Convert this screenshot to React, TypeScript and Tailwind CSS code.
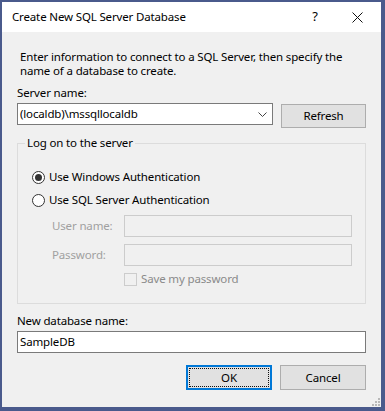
import React from "react";

const font = "font-['Noto_Sans',sans-serif] tracking-[-0.15px]";

function Radio({ checked, label }: { checked?: boolean; label: string }) {
  return (
    <div className="flex items-center h-[16px]">
      <span className="w-[13px] h-[13px] rounded-full border border-[#333] bg-white flex items-center justify-center shrink-0">
        {checked && <span className="w-[7px] h-[7px] rounded-full bg-[#333]" />}
      </span>
      <span className="ml-[4px] text-[11.5px] leading-[16px] text-black">{label}</span>
    </div>
  );
}

function DisabledField({ label }: { label: string }) {
  return (
    <div className="flex items-center h-[22px]">
      <span className="w-[92px] pl-[20px] text-[11.5px] text-[#a0a0a0] whitespace-nowrap">{label}</span>
      <div className="w-[228px] h-[22px] border border-[#cccccc] bg-[#f0f0f0]" />
    </div>
  );
}

export default function App() {
  return (
    <div className={`w-[385px] h-[411px] bg-[#4a5a8c] pt-[2px] pl-[2px] pr-[4px] pb-[4px] ${font}`}>
      <div className="relative flex flex-col h-full bg-[#f0f0f0]">
        {/* title bar */}
        <div className="flex items-center h-[30px] bg-white pl-[10px] shrink-0">
          <span className="text-[11.5px] text-black">Create New SQL Server Database</span>
          <span className="ml-auto w-[20px] text-center text-[13px] text-black">?</span>
          <svg className="ml-[27px] mr-[18px]" width="11" height="11" viewBox="0 0 11 11">
            <path d="M0.5 0.5 L10.5 10.5 M10.5 0.5 L0.5 10.5" stroke="#111" strokeWidth="1" />
          </svg>
        </div>

        <div className="flex flex-col px-[15px]">
          <p className="mt-[18px] ml-[3px] text-[11.5px] leading-[14px] text-black">
            Enter information to connect to a SQL Server, then specify the name of a database to create.
          </p>

          <label className="mt-[8px] text-[11.5px] leading-[14px] text-black">Server name:</label>
          <div className="flex items-start mt-[3px]">
            <div className="flex items-center w-[256px] h-[22px] border border-[#7a7a7a] bg-white pl-[2px] pr-[5px]">
              <span className="text-[11.5px] text-black">(localdb)\mssqllocaldb</span>
              <svg className="ml-auto" width="9" height="5" viewBox="0 0 9 5">
                <path d="M0.5 0.5 L4.5 4.5 L8.5 0.5" stroke="#444" fill="none" />
              </svg>
            </div>
            <button className="ml-[8px] mt-[1px] w-[85px] h-[24px] border border-[#adadad] bg-[#e1e1e1] text-[11.5px] text-black">
              Refresh
            </button>
          </div>

          {/* group box */}
          <div className="relative mt-[15px] h-[161px] border border-[#dcdcdc] pl-[14px] pt-[25px]">
            <span className="absolute left-[7px] top-[-9px] px-[2px] bg-[#f0f0f0] text-[11.5px] leading-[16px] text-black">
              Log on to the server
            </span>
            <div className="flex flex-col gap-[7px]">
              <Radio checked label="Use Windows Authentication" />
              <Radio label="Use SQL Server Authentication" />
            </div>
            <div className="flex flex-col gap-[7px] mt-[7px]">
              <DisabledField label="User name:" />
              <DisabledField label="Password:" />
            </div>
            <div className="flex items-center mt-[6px] ml-[92px] h-[14px]">
              <span className="w-[13px] h-[13px] border border-[#cccccc] bg-[#f0f0f0]" />
              <span className="ml-[4px] text-[11.5px] text-[#8a8a8a]">Save my password</span>
            </div>
          </div>

          <label className="mt-[10px] text-[11.5px] leading-[14px] text-black">New database name:</label>
          <div className="flex items-center mt-[3px] w-[349px] h-[22px] border border-[#7a7a7a] bg-white pl-[2px]">
            <span className="text-[11.5px] text-black">SampleDB</span>
          </div>

          <div className="flex justify-end gap-[8px] mt-[12px]">
            <button className="w-[86px] h-[25px] border-2 border-[#0078d7] bg-[#e1e1e1] p-[1px]">
              <span className="flex items-center justify-center w-full h-full border border-dotted border-[#111] text-[11.5px] text-black">
                OK
              </span>
            </button>
            <button className="w-[86px] h-[25px] border border-[#adadad] bg-[#e1e1e1] text-[11.5px] text-black">
              Cancel
            </button>
          </div>
        </div>

        {/* resize grip */}
        <svg className="absolute right-[1px] bottom-[1px]" width="8" height="8" viewBox="0 0 8 8" fill="#b8b8b8">
          <rect x="6" y="0" width="2" height="2" />
          <rect x="3" y="3" width="2" height="2" />
          <rect x="6" y="3" width="2" height="2" />
          <rect x="0" y="6" width="2" height="2" />
          <rect x="3" y="6" width="2" height="2" />
          <rect x="6" y="6" width="2" height="2" />
        </svg>
      </div>
    </div>
  );
}
